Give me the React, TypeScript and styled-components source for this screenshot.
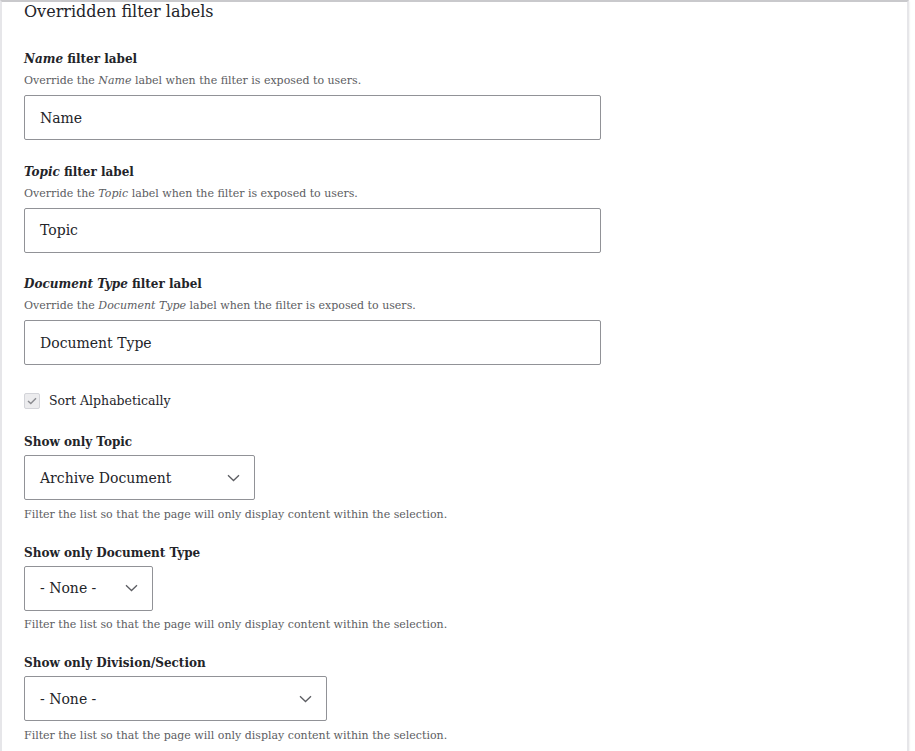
import React from "react";
import styled, { createGlobalStyle } from "styled-components";

const Global = createGlobalStyle`
  html, body { margin: 0; padding: 0; background: #fff; }
  body { font-family: "DejaVu Serif", "Liberation Serif", serif; color: #232429; }
`;

const Frame = styled.div`
  width: 909px;
  min-height: 751px;
  box-sizing: border-box;
  border-left: 2px solid #e6e6e9;
  border-right: 2px solid #e6e6e9;
  border-top: 2px solid #c9c9cc;
  box-shadow: 0 1px 2px rgba(0,0,0,0.12);
  padding: 0 0 0 22px;
  display: flex;
  flex-direction: column;
`;

const Title = styled.h2`
  margin: 0;
  font-size: 16px;
  font-weight: 400;
  line-height: 20px;
  color: #232429;
`;

const Field = styled.div<{ $top: number }>`
  margin-top: ${(p) => p.$top}px;
  display: flex;
  flex-direction: column;
  align-items: flex-start;
`;

const Label = styled.div`
  font-size: 12px;
  font-weight: 700;
  line-height: 18px;
  color: #232429;
`;

const Desc = styled.div<{ $top?: number }>`
  margin-top: ${(p) => p.$top ?? 5}px;
  font-size: 11px;
  line-height: 16px;
  color: #5c5d62;
`;

const TextBox = styled.div`
  margin-top: 6px;
  width: 577px;
  height: 45px;
  box-sizing: border-box;
  border: 1px solid #919297;
  border-radius: 2px;
  padding: 0 15px;
  display: flex;
  align-items: center;
  font-size: 14px;
  color: #232429;
`;

const SelectBox = styled.div<{ $w: number }>`
  margin-top: 4px;
  width: ${(p) => p.$w}px;
  height: 45px;
  box-sizing: border-box;
  border: 1px solid #919297;
  border-radius: 2px;
  padding: 0 14px 0 15px;
  display: flex;
  align-items: center;
  justify-content: space-between;
  font-size: 14px;
  color: #232429;
`;

const CheckRow = styled.label`
  margin-top: 27px;
  display: flex;
  align-items: center;
  gap: 9px;
  font-size: 12.5px;
  line-height: 18px;
  color: #232429;
`;

const Check = styled.span`
  width: 16px;
  height: 16px;
  box-sizing: border-box;
  border: 1px solid #d3d4d9;
  border-radius: 2px;
  background: #ececee;
  display: flex;
  align-items: center;
  justify-content: center;
`;

const Chevron = () => (
  <svg width="13" height="8" viewBox="0 0 13 8" fill="none">
    <path d="M1 1.2L6.5 6.5L12 1.2" stroke="#5c5d62" strokeWidth="1.3" />
  </svg>
);

const labels = [
  { name: "Name", top: 28 },
  { name: "Topic", top: 22.5 },
  { name: "Document Type", top: 22.5 },
];

const selects = [
  { label: "Show only Topic", value: "Archive Document", w: 231, top: 23 },
  { label: "Show only Document Type", value: "- None -", w: 129, top: 21 },
  { label: "Show only Division/Section", value: "- None -", w: 303, top: 21 },
];

export default function App() {
  return (
    <>
      <Global />
      <Frame>
        <Title>Overridden filter labels</Title>
        {labels.map((l) => (
          <Field key={l.name} $top={l.top}>
            <Label>
              <em>{l.name}</em> filter label
            </Label>
            <Desc>
              Override the <em>{l.name}</em> label when the filter is exposed to users.
            </Desc>
            <TextBox>{l.name}</TextBox>
          </Field>
        ))}
        <CheckRow>
          <Check>
            <svg width="10" height="8" viewBox="0 0 10 8" fill="none">
              <path d="M1 4L3.8 6.6L9 1.2" stroke="#8a8b90" strokeWidth="1.4" />
            </svg>
          </Check>
          Sort Alphabetically
        </CheckRow>
        {selects.map((s) => (
          <Field key={s.label} $top={s.top}>
            <Label>{s.label}</Label>
            <SelectBox $w={s.w}>
              <span>{s.value}</span>
              <Chevron />
            </SelectBox>
            <Desc $top={6.5}>Filter the list so that the page will only display content within the selection.</Desc>
          </Field>
        ))}
      </Frame>
    </>
  );
}
